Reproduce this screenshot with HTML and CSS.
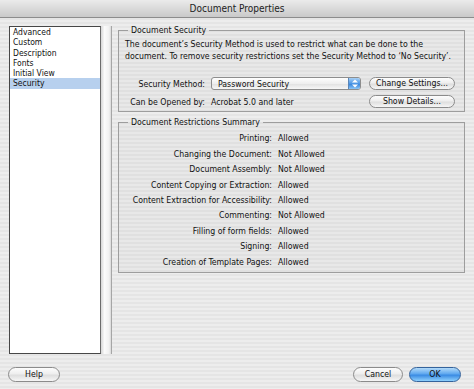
FILE: index.html
```html
<!DOCTYPE html>
<html>
<head>
	<title>Document Properties</title>
	<link rel="stylesheet" href="styles.css">
</head>
<body>
	<div class="titlebar">Document Properties</div>

	<div class="content">
		<div class="sidebar">
			<ul class="list">
				<li>Advanced</li>
				<li>Custom</li>
				<li>Description</li>
				<li>Fonts</li>
				<li>Initial View</li>
				<li class="selected">Security</li>
			</ul>
			<div class="scrollbar"></div>
		</div>

		<div class="panel">
			<fieldset class="group security">
				<legend>Document Security</legend>
				<p class="desc">The document’s Security Method is used to restrict what can be done to the<br>document. To remove security restrictions set the Security Method to ‘No Security’.</p>
				<div class="method-grid">
					<span class="label">Security Method:</span>
					<div class="popup">
						<span>Password Security</span>
						<span class="arrows">
							<svg width="8" height="9" viewBox="0 0 8 9">
								<path d="M4 0.5 L7 3.5 H1 Z" fill="#fff"/>
								<path d="M4 8.5 L7 5.5 H1 Z" fill="#fff"/>
							</svg>
						</span>
					</div>
					<button class="btn">Change Settings...</button>
					<span class="label">Can be Opened by:</span>
					<span>Acrobat 5.0 and later</span>
					<button class="btn">Show Details...</button>
				</div>
			</fieldset>

			<fieldset class="group restrictions">
				<legend>Document Restrictions Summary</legend>
				<div class="summary">
					<span class="label">Printing:</span><span>Allowed</span>
					<span class="label">Changing the Document:</span><span>Not Allowed</span>
					<span class="label">Document Assembly:</span><span>Not Allowed</span>
					<span class="label">Content Copying or Extraction:</span><span>Allowed</span>
					<span class="label">Content Extraction for Accessibility:</span><span>Allowed</span>
					<span class="label">Commenting:</span><span>Not Allowed</span>
					<span class="label">Filling of form fields:</span><span>Allowed</span>
					<span class="label">Signing:</span><span>Allowed</span>
					<span class="label">Creation of Template Pages:</span><span>Allowed</span>
				</div>
			</fieldset>
		</div>
	</div>

	<div class="footer">
		<button class="btn big help">Help</button>
		<button class="btn big cancel">Cancel</button>
		<button class="btn big ok">OK</button>
	</div>
</body>
</html>
```

FILE: styles.css
```css
* {
	box-sizing: border-box;
}

body {
	margin: 0;
	width: 474px;
	height: 389px;
	overflow: hidden;
	font-family: "DejaVu Sans", "Liberation Sans", sans-serif;
	font-stretch: condensed;
	font-size: 8.7px;
	color: #111;
	background: repeating-linear-gradient(to bottom, #ededed 0 2px, #e5e5e5 2px 4px);
}

.titlebar {
	height: 18px;
	line-height: 17px;
	text-align: center;
	font-size: 10px;
	color: #222;
	background: linear-gradient(#ebebeb, #c9c9c9);
	border-bottom: 1px solid #8c8c8c;
}

.content {
	display: flex;
	height: 340px;
	padding-top: 8px;
}

.sidebar {
	display: flex;
	margin-left: 9px;
	height: 328px;
}

.list {
	width: 92px;
	margin: 0;
	padding: 0;
	list-style: none;
	font-size: 8.5px;
	background: #fff;
	border: 1px solid #474747;
	border-right-color: #6c6c6c;
}

.list li {
	height: 10.3px;
	line-height: 10.3px;
	padding-left: 3px;
}

.list li.selected {
	background: #b7d0ee;
}

.scrollbar {
	width: 11px;
	background: linear-gradient(to right, #d6d6d6, #fbfbfb 35%, #f1f1f1 80%, #dadada);
	border-right: 1px solid #a6a6a6;
}

.panel {
	width: 347px;
	margin-left: 6px;
	margin-top: -2px;
}

.group {
	margin: 0;
	min-width: 0;
	border: 1px solid #9d9d9d;
	background: rgba(0, 0, 0, 0.02);
}

.group legend {
	margin-left: 3px;
	padding: 0 3px;
	line-height: 12px;
}

.security {
	padding: 3px 6px 3px;
}

.restrictions {
	margin-top: 4px;
	padding: 3.3px 6px 2px;
}

.desc {
	margin: 0 0 15px;
	line-height: 11.5px;
}

.method-grid {
	display: grid;
	grid-template-columns: 80px 150px 88px;
	grid-auto-rows: 13px;
	column-gap: 6px;
	row-gap: 5px;
	align-items: center;
}

.method-grid .btn {
	margin-left: 2px;
}

.label {
	text-align: right;
}

.popup {
	display: flex;
	align-items: center;
	height: 13px;
	padding-left: 6px;
	border: 1px solid #8d8d8d;
	border-radius: 3px;
	background: linear-gradient(#fefefe, #efefef 50%, #e2e2e2 55%, #f7f7f7);
	overflow: hidden;
}

.arrows {
	display: flex;
	align-items: center;
	justify-content: center;
	width: 12px;
	height: 100%;
	margin-left: auto;
	background: linear-gradient(#a7cff5, #4d97e6 50%, #3784dc 55%, #8cc6f7);
	border-left: 1px solid #5a86b8;
}

.btn {
	height: 13px;
	padding: 0;
	font: inherit;
	line-height: 11px;
	color: #111;
	border: 1px solid #8b8b8b;
	border-radius: 7px;
	background: linear-gradient(#fdfdfd, #eeeeee 45%, #dedede 55%, #f6f6f6);
}

.summary {
	display: grid;
	grid-template-columns: 147px auto;
	column-gap: 6px;
	line-height: 15.4px;
}

.footer {
	display: flex;
	gap: 6px;
	padding: 9px 13px 0 8px;
}

.btn.big {
	height: 15px;
	border-radius: 8px;
	font-size: 8.7px;
	line-height: 13px;
}

.help {
	width: 52px;
}

.cancel {
	width: 50px;
	margin-left: auto;
}

.ok {
	width: 52px;
	border-color: #34639c;
	background: linear-gradient(#b2daf9, #5fa8ef 45%, #3a8be3 55%, #8ed0fd);
}
```
